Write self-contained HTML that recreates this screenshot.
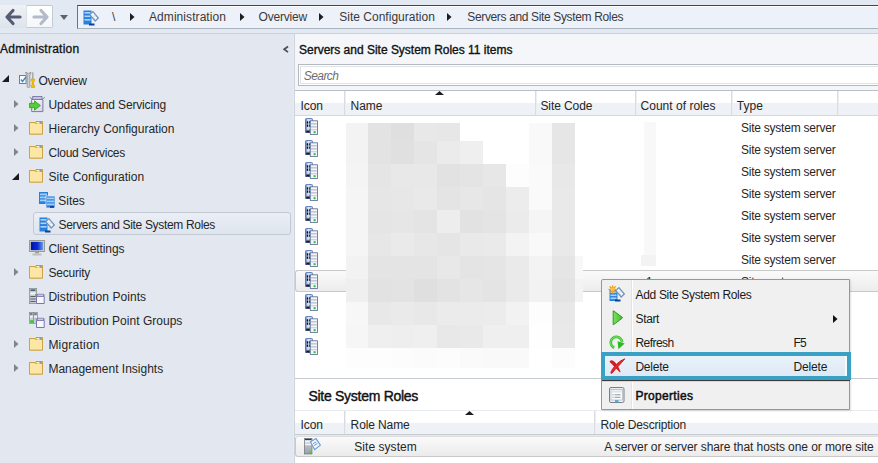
<!DOCTYPE html>
<html><head><meta charset="utf-8"><style>
html,body{margin:0;padding:0;width:878px;height:463px;overflow:hidden;background:#fff;font-family:"Liberation Sans", sans-serif;}
#root{position:relative;width:878px;height:463px;overflow:hidden;}
svg{position:absolute;overflow:visible}
</style></head><body><div id="root">
<div style="position:absolute;left:0px;top:0px;width:878px;height:34px;background:#e3e9f3"></div>
<div style="position:absolute;left:0px;top:5px;width:26px;height:23px;background:linear-gradient(#eef1f6,#dfe4ec);border-right:1px solid #d4d9e1"></div>
<div style="position:absolute;left:26px;top:5px;width:27px;height:23px;background:linear-gradient(#ffffff,#f4f6f9);border:1px solid #c3cad4;border-radius:0 2px 2px 0;box-sizing:border-box;border-left:1px solid #dde2e9"></div>
<svg style="left:4px;top:9px" width="18" height="16" viewBox="0 0 18 16"><path d="M9 1.5 L3 8 L9 14.5 M3.5 8 H16" fill="none" stroke="#565b73" stroke-width="3.2" stroke-linecap="round" stroke-linejoin="round"/></svg>
<svg style="left:32px;top:9px" width="18" height="16" viewBox="0 0 18 16"><path d="M9 1.5 L15 8 L9 14.5 M14.5 8 H2" fill="none" stroke="#b3bac9" stroke-width="3.2" stroke-linecap="round" stroke-linejoin="round"/></svg>
<svg style="left:60px;top:15px" width="8" height="5" viewBox="0 0 8 5"><path d="M0 0 H8 L4 5Z" fill="#5d6168"/></svg>
<div style="position:absolute;left:77px;top:5px;width:801px;height:24px;background:#edf1f9;border-top:1px solid #3e4656;border-left:1px solid #6d7480;border-bottom:1px solid #aab2bc;box-sizing:border-box;box-shadow:inset 0 1px 0 #fff"></div>
<div style="position:absolute;left:0px;top:33px;width:878px;height:1px;background:#c9d1dc"></div>
<svg style="left:83px;top:10px" width="17" height="16" viewBox="0 0 17 16">
<rect x="0.5" y="0.5" width="8" height="14" fill="#2a7fda"/>
<rect x="1.5" y="2" width="6" height="1.6" fill="#a6d6ff"/><rect x="1.5" y="5.5" width="6" height="1.6" fill="#a6d6ff"/><rect x="1.5" y="9" width="6" height="1.6" fill="#a6d6ff"/>
<rect x="6" y="13.5" width="5.5" height="2" fill="#0b3fa0"/>
<path d="M6.8 4.6 L9.9 1.6 L15.3 8 L12.2 11Z" fill="#f4f7fb" stroke="#6f94bc" stroke-width="1.3"/>
<path d="M10 5.5 L11.5 7 M11.5 5 L13 6.5 M10.5 7.5 L12 9" stroke="#b8c8dc" stroke-width="0.7"/>

</svg>
<div style="position:absolute;left:112px;top:6.84px;height:20px;line-height:20px;font-size:12px;font-weight:400;color:#404040;letter-spacing:0.000px;white-space:pre;">\</div>
<svg style="left:130px;top:13px" width="5" height="8" viewBox="0 0 5 8"><path d="M0 0 L4.5 4 L0 8Z" fill="#1e1e1e"/></svg>
<svg style="left:240px;top:13px" width="5" height="8" viewBox="0 0 5 8"><path d="M0 0 L4.5 4 L0 8Z" fill="#1e1e1e"/></svg>
<svg style="left:319px;top:13px" width="5" height="8" viewBox="0 0 5 8"><path d="M0 0 L4.5 4 L0 8Z" fill="#1e1e1e"/></svg>
<svg style="left:447px;top:13px" width="5" height="8" viewBox="0 0 5 8"><path d="M0 0 L4.5 4 L0 8Z" fill="#1e1e1e"/></svg>
<div style="position:absolute;left:149px;top:6.84px;height:20px;line-height:20px;font-size:12px;font-weight:400;color:#3a3a3a;letter-spacing:0.069px;white-space:pre;">Administration</div>
<div style="position:absolute;left:258.6px;top:6.84px;height:20px;line-height:20px;font-size:12px;font-weight:400;color:#3a3a3a;letter-spacing:-0.202px;white-space:pre;">Overview</div>
<div style="position:absolute;left:339.2px;top:6.84px;height:20px;line-height:20px;font-size:12px;font-weight:400;color:#3a3a3a;letter-spacing:0.017px;white-space:pre;">Site Configuration</div>
<div style="position:absolute;left:467.3px;top:6.84px;height:20px;line-height:20px;font-size:12px;font-weight:400;color:#3a3a3a;letter-spacing:-0.354px;white-space:pre;">Servers and Site System Roles</div>
<div style="position:absolute;left:0px;top:34px;width:293px;height:429px;background:#e3e8f0"></div>
<div style="position:absolute;left:293px;top:34px;width:1px;height:429px;background:#e7ebf2"></div>
<div style="position:absolute;left:294px;top:34px;width:1px;height:429px;background:#cdd4de"></div>
<div style="position:absolute;left:0px;top:38.84px;height:20px;line-height:20px;font-size:12px;font-weight:400;color:#111;letter-spacing:0.241px;white-space:pre;-webkit-text-stroke:0.3px #111">Administration</div>
<svg style="left:283px;top:45.5px" width="6" height="7" viewBox="0 0 6 7"><path d="M5 0.5 L1.2 3.3 L5 6.1" fill="none" stroke="#4a5058" stroke-width="1.8"/></svg>
<svg style="left:2px;top:75px" width="7" height="7" viewBox="0 0 7 7"><path d="M7 0 L7 7 L0 7Z" fill="#1a1a1a"/></svg>
<svg style="left:19px;top:72px" width="17" height="16" viewBox="0 0 17 16">
<rect x="0.5" y="3.5" width="6.5" height="8" fill="#fbfbfb" stroke="#7c7c7c" stroke-width="1"/>
<path d="M2 7.5 L3.5 9.5 L7 5" fill="none" stroke="#3a8ad0" stroke-width="1.4"/>
<path d="M6.5 0.5 Q7 2.5 8.2 3 V14.5 Q8.2 15.5 9.5 15.5 Q10.8 15.5 10.8 14.5 V3 Q12 2.5 12 0.5 L10.7 0.5 L10 2 L8.8 2 L8 0.5Z" fill="#d2d2d2" stroke="#8a8a8a" stroke-width="0.8"/>
<rect x="13.2" y="0.3" width="1.2" height="7" fill="#9a9a9a"/>
<path d="M12.2 7 H15.6 V8.8 L14.6 9.8 V12.5 L15.6 13.3 V15.5 H12.2 V13.3 L13.2 12.5 V9.8 L12.2 8.8Z" fill="#f2c100" stroke="#d39a00" stroke-width="0.6"/>
</svg>
<div style="position:absolute;left:38.5px;top:70.84px;height:20px;line-height:20px;font-size:12px;font-weight:400;color:#262626;letter-spacing:-0.239px;white-space:pre;">Overview</div>
<svg style="left:14px;top:100px" width="5" height="8" viewBox="0 0 5 8"><path d="M0 0 L4.5 4 L0 8Z" fill="#80858b"/></svg>
<svg style="left:29px;top:96px" width="17" height="17" viewBox="0 0 17 17">
<defs><linearGradient id="upg" x1="0" y1="0" x2="1" y2="1"><stop offset="0" stop-color="#ffffff"/><stop offset="1" stop-color="#d2d0e4"/></linearGradient></defs>
<path d="M2.7 3.5 H13.9 V15.6 H2.7Z" fill="url(#upg)" stroke="#7a78a6" stroke-width="1"/>
<rect x="3.7" y="0.5" width="9.2" height="3" fill="#c6c4de" stroke="#7a78a6" stroke-width="0.9"/>
<path d="M3.7 3.5 L0.8 1.2 M12.9 3.5 L15.8 1.2" stroke="#7a78a6" stroke-width="0.9"/>
<path d="M0.5 7.3 H5.5 V4.8 L11.4 9.5 L5.5 14.2 V11.7 H0.5Z" fill="#56cc3a" stroke="#2e9a20" stroke-width="0.8"/>
</svg>
<div style="position:absolute;left:48.6px;top:94.84px;height:20px;line-height:20px;font-size:12px;font-weight:400;color:#262626;letter-spacing:-0.160px;white-space:pre;">Updates and Servicing</div>
<svg style="left:14px;top:124px" width="5" height="8" viewBox="0 0 5 8"><path d="M0 0 L4.5 4 L0 8Z" fill="#80858b"/></svg>
<svg style="left:29px;top:121px" width="15" height="14" viewBox="0 0 15 14">
<path d="M0.5 1.5 H6 L7 0.5 H13.5 V13 H0.5Z" fill="#e9c46a" stroke="#c99b3c" stroke-width="1"/>
<rect x="8" y="1.3" width="3" height="1.2" fill="#ffffff"/><rect x="10.5" y="1.3" width="2.2" height="1.2" fill="#3a8ee0"/>
<path d="M0.5 1.5 H6 L7.5 3.3 H13.5 V13 H0.5Z" fill="#fbe29a" stroke="#cda347" stroke-width="1"/>
<rect x="1.2" y="3" width="11.6" height="9.3" fill="#fde7a4"/>
</svg>
<div style="position:absolute;left:48.6px;top:118.84px;height:20px;line-height:20px;font-size:12px;font-weight:400;color:#262626;letter-spacing:-0.011px;white-space:pre;">Hierarchy Configuration</div>
<svg style="left:14px;top:148px" width="5" height="8" viewBox="0 0 5 8"><path d="M0 0 L4.5 4 L0 8Z" fill="#80858b"/></svg>
<svg style="left:29px;top:145px" width="15" height="14" viewBox="0 0 15 14">
<path d="M0.5 1.5 H6 L7 0.5 H13.5 V13 H0.5Z" fill="#e9c46a" stroke="#c99b3c" stroke-width="1"/>
<rect x="8" y="1.3" width="3" height="1.2" fill="#ffffff"/><rect x="10.5" y="1.3" width="2.2" height="1.2" fill="#3a8ee0"/>
<path d="M0.5 1.5 H6 L7.5 3.3 H13.5 V13 H0.5Z" fill="#fbe29a" stroke="#cda347" stroke-width="1"/>
<rect x="1.2" y="3" width="11.6" height="9.3" fill="#fde7a4"/>
</svg>
<div style="position:absolute;left:48.6px;top:142.84px;height:20px;line-height:20px;font-size:12px;font-weight:400;color:#262626;letter-spacing:-0.315px;white-space:pre;">Cloud Services</div>
<svg style="left:12px;top:173px" width="7" height="7" viewBox="0 0 7 7"><path d="M7 0 L7 7 L0 7Z" fill="#1a1a1a"/></svg>
<svg style="left:29px;top:169px" width="15" height="14" viewBox="0 0 15 14">
<path d="M0.5 1.5 H6 L7 0.5 H13.5 V13 H0.5Z" fill="#e9c46a" stroke="#c99b3c" stroke-width="1"/>
<rect x="8" y="1.3" width="3" height="1.2" fill="#ffffff"/><rect x="10.5" y="1.3" width="2.2" height="1.2" fill="#3a8ee0"/>
<path d="M0.5 1.5 H6 L7.5 3.3 H13.5 V13 H0.5Z" fill="#fbe29a" stroke="#cda347" stroke-width="1"/>
<rect x="1.2" y="3" width="11.6" height="9.3" fill="#fde7a4"/>
</svg>
<div style="position:absolute;left:48.6px;top:166.84px;height:20px;line-height:20px;font-size:12px;font-weight:400;color:#262626;letter-spacing:0.006px;white-space:pre;">Site Configuration</div>
<svg style="left:38px;top:191px" width="18" height="18" viewBox="0 0 18 18">
<rect x="1" y="1" width="9" height="12" fill="#2a7fda"/>
<rect x="2" y="2.5" width="7" height="1.8" fill="#9fd0fb"/><rect x="2" y="5.5" width="7" height="1.8" fill="#9fd0fb"/><rect x="2" y="8.5" width="7" height="1.8" fill="#9fd0fb"/>
<rect x="8" y="5" width="9" height="12" fill="#2a7fda" stroke="#e3e8f0" stroke-width="0.8"/>
<rect x="9" y="6.5" width="7" height="1.8" fill="#9fd0fb"/><rect x="9" y="9.5" width="7" height="1.8" fill="#9fd0fb"/><rect x="9" y="12.5" width="7" height="1.8" fill="#9fd0fb"/>
<rect x="12" y="15" width="4" height="1.8" fill="#0b3fa0"/>
</svg>
<div style="position:absolute;left:58.3px;top:190.84px;height:20px;line-height:20px;font-size:12px;font-weight:400;color:#262626;letter-spacing:-0.037px;white-space:pre;">Sites</div>
<div style="position:absolute;left:33px;top:212px;width:258px;height:23px;box-sizing:border-box;border:1px solid #c3c9d3;border-radius:3px;background:linear-gradient(#eaeef5,#dfe5ee)"></div>
<svg style="left:39px;top:217px" width="17" height="16" viewBox="0 0 17 16">
<rect x="0.5" y="0.5" width="8" height="14" fill="#2a7fda"/>
<rect x="1.5" y="2" width="6" height="1.6" fill="#a6d6ff"/><rect x="1.5" y="5.5" width="6" height="1.6" fill="#a6d6ff"/><rect x="1.5" y="9" width="6" height="1.6" fill="#a6d6ff"/>
<rect x="6" y="13.5" width="5.5" height="2" fill="#0b3fa0"/>
<path d="M6.8 4.6 L9.9 1.6 L15.3 8 L12.2 11Z" fill="#f4f7fb" stroke="#6f94bc" stroke-width="1.3"/>
<path d="M10 5.5 L11.5 7 M11.5 5 L13 6.5 M10.5 7.5 L12 9" stroke="#b8c8dc" stroke-width="0.7"/>

</svg>
<div style="position:absolute;left:58.5px;top:214.84px;height:20px;line-height:20px;font-size:12px;font-weight:400;color:#262626;letter-spacing:-0.330px;white-space:pre;">Servers and Site System Roles</div>
<svg style="left:29px;top:240px" width="16" height="16" viewBox="0 0 16 16">
<rect x="0.5" y="0.5" width="15" height="11" fill="#d8d8d0" stroke="#9a9a90" stroke-width="1"/>
<defs><linearGradient id="scr" x1="0" y1="0" x2="1" y2="0"><stop offset="0" stop-color="#0010a8"/><stop offset="0.55" stop-color="#0a2ed0"/><stop offset="1" stop-color="#6aa0f0"/></linearGradient></defs>
<rect x="1.8" y="1.8" width="12.4" height="8.4" fill="url(#scr)"/>
<rect x="6" y="12" width="4" height="1.5" fill="#a0a098"/><rect x="3.5" y="13.5" width="9" height="2" fill="#c0c0b8"/>
</svg>
<div style="position:absolute;left:48.4px;top:238.84px;height:20px;line-height:20px;font-size:12px;font-weight:400;color:#262626;letter-spacing:-0.092px;white-space:pre;">Client Settings</div>
<svg style="left:14px;top:268px" width="5" height="8" viewBox="0 0 5 8"><path d="M0 0 L4.5 4 L0 8Z" fill="#80858b"/></svg>
<svg style="left:29px;top:265px" width="15" height="14" viewBox="0 0 15 14">
<path d="M0.5 1.5 H6 L7 0.5 H13.5 V13 H0.5Z" fill="#e9c46a" stroke="#c99b3c" stroke-width="1"/>
<rect x="8" y="1.3" width="3" height="1.2" fill="#ffffff"/><rect x="10.5" y="1.3" width="2.2" height="1.2" fill="#3a8ee0"/>
<path d="M0.5 1.5 H6 L7.5 3.3 H13.5 V13 H0.5Z" fill="#fbe29a" stroke="#cda347" stroke-width="1"/>
<rect x="1.2" y="3" width="11.6" height="9.3" fill="#fde7a4"/>
</svg>
<div style="position:absolute;left:48.4px;top:262.84px;height:20px;line-height:20px;font-size:12px;font-weight:400;color:#262626;letter-spacing:-0.195px;white-space:pre;">Security</div>
<svg style="left:29px;top:288px" width="16" height="16" viewBox="0 0 16 16">
<rect x="0.3" y="0.3" width="7.4" height="15.4" fill="#c8ccd0" stroke="#7a8088" stroke-width="0.6"/>
<rect x="1.5" y="1.5" width="5" height="1.2" fill="#1a3a5a"/>
<rect x="1.3" y="4.5" width="5.4" height="2" fill="#f4f6f8"/><rect x="1.3" y="8" width="5.4" height="1" fill="#5a6068"/><rect x="1.3" y="10.5" width="5.4" height="1" fill="#5a6068"/><rect x="1.3" y="13" width="5.4" height="1" fill="#5a6068"/>
<rect x="6" y="6" width="1.5" height="1.5" fill="#4ac040"/>
<path d="M7.5 8.3 H15.2 V15.5 H7.5Z" fill="#f6f6fb" stroke="#7a74b0" stroke-width="1"/>
<rect x="8.2" y="6.2" width="6.3" height="2.1" fill="#d6d3ea" stroke="#7a74b0" stroke-width="0.8"/>
<path d="M8.2 8.3 L6.6 6.6 M14.5 8.3 L16 6.6" stroke="#7a74b0" stroke-width="0.8"/>
</svg>
<div style="position:absolute;left:48.4px;top:286.84px;height:20px;line-height:20px;font-size:12px;font-weight:400;color:#262626;letter-spacing:0.052px;white-space:pre;">Distribution Points</div>
<svg style="left:29px;top:312px" width="16" height="16" viewBox="0 0 16 16">
<rect x="0.3" y="0.3" width="4" height="11" fill="#c8ccd0" stroke="#7a8088" stroke-width="0.6"/>
<rect x="4.5" y="0.3" width="4" height="11" fill="#c8ccd0" stroke="#7a8088" stroke-width="0.6"/>
<rect x="1" y="1.5" width="2.5" height="1" fill="#1a3a5a"/><rect x="5.2" y="1.5" width="2.5" height="1" fill="#1a3a5a"/>
<rect x="1" y="4" width="2.6" height="1.6" fill="#f4f6f8"/><rect x="5.2" y="4" width="2.6" height="1.6" fill="#f4f6f8"/>
<rect x="1.2" y="8.2" width="3" height="2.8" fill="#44c43a"/>
<path d="M7.5 8.3 H15.2 V15.5 H7.5Z" fill="#f6f6fb" stroke="#7a74b0" stroke-width="1"/>
<rect x="8.2" y="6.2" width="6.3" height="2.1" fill="#d6d3ea" stroke="#7a74b0" stroke-width="0.8"/>
<path d="M8.2 8.3 L6.6 6.6 M14.5 8.3 L16 6.6" stroke="#7a74b0" stroke-width="0.8"/>
</svg>
<div style="position:absolute;left:48.4px;top:310.84px;height:20px;line-height:20px;font-size:12px;font-weight:400;color:#262626;letter-spacing:0.024px;white-space:pre;">Distribution Point Groups</div>
<svg style="left:14px;top:340px" width="5" height="8" viewBox="0 0 5 8"><path d="M0 0 L4.5 4 L0 8Z" fill="#80858b"/></svg>
<svg style="left:29px;top:337px" width="15" height="14" viewBox="0 0 15 14">
<path d="M0.5 1.5 H6 L7 0.5 H13.5 V13 H0.5Z" fill="#e9c46a" stroke="#c99b3c" stroke-width="1"/>
<rect x="8" y="1.3" width="3" height="1.2" fill="#ffffff"/><rect x="10.5" y="1.3" width="2.2" height="1.2" fill="#3a8ee0"/>
<path d="M0.5 1.5 H6 L7.5 3.3 H13.5 V13 H0.5Z" fill="#fbe29a" stroke="#cda347" stroke-width="1"/>
<rect x="1.2" y="3" width="11.6" height="9.3" fill="#fde7a4"/>
</svg>
<div style="position:absolute;left:48.4px;top:334.84px;height:20px;line-height:20px;font-size:12px;font-weight:400;color:#262626;letter-spacing:0.216px;white-space:pre;">Migration</div>
<svg style="left:14px;top:364px" width="5" height="8" viewBox="0 0 5 8"><path d="M0 0 L4.5 4 L0 8Z" fill="#80858b"/></svg>
<svg style="left:29px;top:361px" width="15" height="14" viewBox="0 0 15 14">
<path d="M0.5 1.5 H6 L7 0.5 H13.5 V13 H0.5Z" fill="#e9c46a" stroke="#c99b3c" stroke-width="1"/>
<rect x="8" y="1.3" width="3" height="1.2" fill="#ffffff"/><rect x="10.5" y="1.3" width="2.2" height="1.2" fill="#3a8ee0"/>
<path d="M0.5 1.5 H6 L7.5 3.3 H13.5 V13 H0.5Z" fill="#fbe29a" stroke="#cda347" stroke-width="1"/>
<rect x="1.2" y="3" width="11.6" height="9.3" fill="#fde7a4"/>
</svg>
<div style="position:absolute;left:48.4px;top:358.84px;height:20px;line-height:20px;font-size:12px;font-weight:400;color:#262626;letter-spacing:0.003px;white-space:pre;">Management Insights</div>
<div style="position:absolute;left:295px;top:34px;width:583px;height:82px;background:#f4f6fa"></div>
<div style="position:absolute;left:299px;top:39.84px;height:20px;line-height:20px;font-size:12px;font-weight:400;color:#111;letter-spacing:-0.010px;white-space:pre;-webkit-text-stroke:0.35px #111">Servers and Site System Roles 11 items</div>
<div style="position:absolute;left:298px;top:64px;width:580px;height:22px;box-sizing:border-box;border:1px solid #b4b9bf;border-right:none;background:#fff"></div>
<div style="position:absolute;left:300px;top:66px;width:578px;height:18px;box-sizing:border-box;border:1px solid #dfe2e6;border-right:none"></div>
<div style="position:absolute;left:303.8px;top:65.84px;height:20px;line-height:20px;font-size:12px;font-weight:400;color:#6e6e6e;letter-spacing:-0.589px;white-space:pre;font-style:italic">Search</div>
<div style="position:absolute;left:295px;top:90px;width:583px;height:288px;background:#fff"></div>
<div style="position:absolute;left:295px;top:90px;width:583px;height:1px;background:#b9bfc6"></div>
<div style="position:absolute;left:295px;top:91px;width:583px;height:12px;background:#fff"></div>
<div style="position:absolute;left:295px;top:103px;width:583px;height:12px;background:#eef1f5"></div>
<div style="position:absolute;left:295px;top:115px;width:583px;height:1px;background:#d5d9de"></div>
<div style="position:absolute;left:344px;top:91px;width:2px;height:24px;background:linear-gradient(90deg,#cfd3d8,#f6f7f9)"></div>
<div style="position:absolute;left:535px;top:91px;width:2px;height:24px;background:linear-gradient(90deg,#cfd3d8,#f6f7f9)"></div>
<div style="position:absolute;left:635px;top:91px;width:2px;height:24px;background:linear-gradient(90deg,#cfd3d8,#f6f7f9)"></div>
<div style="position:absolute;left:731px;top:91px;width:2px;height:24px;background:linear-gradient(90deg,#cfd3d8,#f6f7f9)"></div>
<div style="position:absolute;left:837px;top:91px;width:2px;height:24px;background:linear-gradient(90deg,#cfd3d8,#f6f7f9)"></div>
<div style="position:absolute;left:300.5px;top:95.84px;height:20px;line-height:20px;font-size:12px;font-weight:400;color:#262626;letter-spacing:-0.047px;white-space:pre;">Icon</div>
<div style="position:absolute;left:350.5px;top:95.84px;height:20px;line-height:20px;font-size:12px;font-weight:400;color:#262626;letter-spacing:-0.004px;white-space:pre;">Name</div>
<div style="position:absolute;left:540.4px;top:95.84px;height:20px;line-height:20px;font-size:12px;font-weight:400;color:#262626;letter-spacing:-0.078px;white-space:pre;">Site Code</div>
<div style="position:absolute;left:640.5px;top:95.84px;height:20px;line-height:20px;font-size:12px;font-weight:400;color:#262626;letter-spacing:0.020px;white-space:pre;">Count of roles</div>
<div style="position:absolute;left:736.8px;top:95.84px;height:20px;line-height:20px;font-size:12px;font-weight:400;color:#262626;letter-spacing:-0.004px;white-space:pre;">Type</div>
<svg style="left:435px;top:91px" width="9" height="4" viewBox="0 0 9 4"><path d="M0 4 L4.5 0 L9 4Z" fill="#1e1e1e"/></svg>
<div style="position:absolute;left:295px;top:270px;width:583px;height:22px;box-sizing:border-box;border:1px solid #c9c9c9;border-right:none;border-radius:3px 0 0 3px;background:linear-gradient(#fafafa,#ececec)"></div>
<svg style="left:305px;top:118px" width="14" height="17" viewBox="0 0 14 17">
<defs><linearGradient id="bg118" x1="0" y1="0" x2="1" y2="0"><stop offset="0" stop-color="#4a72c8"/><stop offset="0.35" stop-color="#dfe8f8"/><stop offset="1" stop-color="#aabfe6"/></linearGradient></defs>
<path d="M0.5 1.5 Q0.5 0.5 1.5 0.5 H6.5 Q7.5 0.5 7.5 1.5 V14.5 H0.5Z" fill="url(#bg118)" stroke="#4a6ab0" stroke-width="0.8"/>
<rect x="1.8" y="3.3" width="1.4" height="2.3" fill="#0a0a0a"/><rect x="4.2" y="3.3" width="1.4" height="2.3" fill="#0a0a0a"/>
<rect x="1.8" y="6.5" width="1.4" height="2.3" fill="#0a0a0a"/><rect x="4.2" y="6.5" width="1.4" height="2.3" fill="#0a0a0a"/>
<path d="M1 14.5 L2 11.5 L3 13.5 L4.2 11 L5 14.5Z" fill="#0a0a0a"/>
<rect x="5.3" y="2.8" width="7.2" height="13.7" fill="#f4f6fa" stroke="#66789a" stroke-width="0.9"/>
<rect x="6" y="5.3" width="5.8" height="1.1" fill="#a9b5c6"/><rect x="6" y="8.3" width="5.8" height="1.1" fill="#a9b5c6"/><rect x="6" y="11.3" width="5.8" height="0.9" fill="#b9c3d2"/>
<rect x="8.6" y="13.2" width="2" height="2" fill="#22c040"/>
</svg>
<svg style="left:305px;top:140px" width="14" height="17" viewBox="0 0 14 17">
<defs><linearGradient id="bg140" x1="0" y1="0" x2="1" y2="0"><stop offset="0" stop-color="#4a72c8"/><stop offset="0.35" stop-color="#dfe8f8"/><stop offset="1" stop-color="#aabfe6"/></linearGradient></defs>
<path d="M0.5 1.5 Q0.5 0.5 1.5 0.5 H6.5 Q7.5 0.5 7.5 1.5 V14.5 H0.5Z" fill="url(#bg140)" stroke="#4a6ab0" stroke-width="0.8"/>
<rect x="1.8" y="3.3" width="1.4" height="2.3" fill="#0a0a0a"/><rect x="4.2" y="3.3" width="1.4" height="2.3" fill="#0a0a0a"/>
<rect x="1.8" y="6.5" width="1.4" height="2.3" fill="#0a0a0a"/><rect x="4.2" y="6.5" width="1.4" height="2.3" fill="#0a0a0a"/>
<path d="M1 14.5 L2 11.5 L3 13.5 L4.2 11 L5 14.5Z" fill="#0a0a0a"/>
<rect x="5.3" y="2.8" width="7.2" height="13.7" fill="#f4f6fa" stroke="#66789a" stroke-width="0.9"/>
<rect x="6" y="5.3" width="5.8" height="1.1" fill="#a9b5c6"/><rect x="6" y="8.3" width="5.8" height="1.1" fill="#a9b5c6"/><rect x="6" y="11.3" width="5.8" height="0.9" fill="#b9c3d2"/>
<rect x="8.6" y="13.2" width="2" height="2" fill="#22c040"/>
</svg>
<svg style="left:305px;top:162px" width="14" height="17" viewBox="0 0 14 17">
<defs><linearGradient id="bg162" x1="0" y1="0" x2="1" y2="0"><stop offset="0" stop-color="#4a72c8"/><stop offset="0.35" stop-color="#dfe8f8"/><stop offset="1" stop-color="#aabfe6"/></linearGradient></defs>
<path d="M0.5 1.5 Q0.5 0.5 1.5 0.5 H6.5 Q7.5 0.5 7.5 1.5 V14.5 H0.5Z" fill="url(#bg162)" stroke="#4a6ab0" stroke-width="0.8"/>
<rect x="1.8" y="3.3" width="1.4" height="2.3" fill="#0a0a0a"/><rect x="4.2" y="3.3" width="1.4" height="2.3" fill="#0a0a0a"/>
<rect x="1.8" y="6.5" width="1.4" height="2.3" fill="#0a0a0a"/><rect x="4.2" y="6.5" width="1.4" height="2.3" fill="#0a0a0a"/>
<path d="M1 14.5 L2 11.5 L3 13.5 L4.2 11 L5 14.5Z" fill="#0a0a0a"/>
<rect x="5.3" y="2.8" width="7.2" height="13.7" fill="#f4f6fa" stroke="#66789a" stroke-width="0.9"/>
<rect x="6" y="5.3" width="5.8" height="1.1" fill="#a9b5c6"/><rect x="6" y="8.3" width="5.8" height="1.1" fill="#a9b5c6"/><rect x="6" y="11.3" width="5.8" height="0.9" fill="#b9c3d2"/>
<rect x="8.6" y="13.2" width="2" height="2" fill="#22c040"/>
</svg>
<svg style="left:305px;top:184px" width="14" height="17" viewBox="0 0 14 17">
<defs><linearGradient id="bg184" x1="0" y1="0" x2="1" y2="0"><stop offset="0" stop-color="#4a72c8"/><stop offset="0.35" stop-color="#dfe8f8"/><stop offset="1" stop-color="#aabfe6"/></linearGradient></defs>
<path d="M0.5 1.5 Q0.5 0.5 1.5 0.5 H6.5 Q7.5 0.5 7.5 1.5 V14.5 H0.5Z" fill="url(#bg184)" stroke="#4a6ab0" stroke-width="0.8"/>
<rect x="1.8" y="3.3" width="1.4" height="2.3" fill="#0a0a0a"/><rect x="4.2" y="3.3" width="1.4" height="2.3" fill="#0a0a0a"/>
<rect x="1.8" y="6.5" width="1.4" height="2.3" fill="#0a0a0a"/><rect x="4.2" y="6.5" width="1.4" height="2.3" fill="#0a0a0a"/>
<path d="M1 14.5 L2 11.5 L3 13.5 L4.2 11 L5 14.5Z" fill="#0a0a0a"/>
<rect x="5.3" y="2.8" width="7.2" height="13.7" fill="#f4f6fa" stroke="#66789a" stroke-width="0.9"/>
<rect x="6" y="5.3" width="5.8" height="1.1" fill="#a9b5c6"/><rect x="6" y="8.3" width="5.8" height="1.1" fill="#a9b5c6"/><rect x="6" y="11.3" width="5.8" height="0.9" fill="#b9c3d2"/>
<rect x="8.6" y="13.2" width="2" height="2" fill="#22c040"/>
</svg>
<svg style="left:305px;top:206px" width="14" height="17" viewBox="0 0 14 17">
<defs><linearGradient id="bg206" x1="0" y1="0" x2="1" y2="0"><stop offset="0" stop-color="#4a72c8"/><stop offset="0.35" stop-color="#dfe8f8"/><stop offset="1" stop-color="#aabfe6"/></linearGradient></defs>
<path d="M0.5 1.5 Q0.5 0.5 1.5 0.5 H6.5 Q7.5 0.5 7.5 1.5 V14.5 H0.5Z" fill="url(#bg206)" stroke="#4a6ab0" stroke-width="0.8"/>
<rect x="1.8" y="3.3" width="1.4" height="2.3" fill="#0a0a0a"/><rect x="4.2" y="3.3" width="1.4" height="2.3" fill="#0a0a0a"/>
<rect x="1.8" y="6.5" width="1.4" height="2.3" fill="#0a0a0a"/><rect x="4.2" y="6.5" width="1.4" height="2.3" fill="#0a0a0a"/>
<path d="M1 14.5 L2 11.5 L3 13.5 L4.2 11 L5 14.5Z" fill="#0a0a0a"/>
<rect x="5.3" y="2.8" width="7.2" height="13.7" fill="#f4f6fa" stroke="#66789a" stroke-width="0.9"/>
<rect x="6" y="5.3" width="5.8" height="1.1" fill="#a9b5c6"/><rect x="6" y="8.3" width="5.8" height="1.1" fill="#a9b5c6"/><rect x="6" y="11.3" width="5.8" height="0.9" fill="#b9c3d2"/>
<rect x="8.6" y="13.2" width="2" height="2" fill="#22c040"/>
</svg>
<svg style="left:305px;top:228px" width="14" height="17" viewBox="0 0 14 17">
<defs><linearGradient id="bg228" x1="0" y1="0" x2="1" y2="0"><stop offset="0" stop-color="#4a72c8"/><stop offset="0.35" stop-color="#dfe8f8"/><stop offset="1" stop-color="#aabfe6"/></linearGradient></defs>
<path d="M0.5 1.5 Q0.5 0.5 1.5 0.5 H6.5 Q7.5 0.5 7.5 1.5 V14.5 H0.5Z" fill="url(#bg228)" stroke="#4a6ab0" stroke-width="0.8"/>
<rect x="1.8" y="3.3" width="1.4" height="2.3" fill="#0a0a0a"/><rect x="4.2" y="3.3" width="1.4" height="2.3" fill="#0a0a0a"/>
<rect x="1.8" y="6.5" width="1.4" height="2.3" fill="#0a0a0a"/><rect x="4.2" y="6.5" width="1.4" height="2.3" fill="#0a0a0a"/>
<path d="M1 14.5 L2 11.5 L3 13.5 L4.2 11 L5 14.5Z" fill="#0a0a0a"/>
<rect x="5.3" y="2.8" width="7.2" height="13.7" fill="#f4f6fa" stroke="#66789a" stroke-width="0.9"/>
<rect x="6" y="5.3" width="5.8" height="1.1" fill="#a9b5c6"/><rect x="6" y="8.3" width="5.8" height="1.1" fill="#a9b5c6"/><rect x="6" y="11.3" width="5.8" height="0.9" fill="#b9c3d2"/>
<rect x="8.6" y="13.2" width="2" height="2" fill="#22c040"/>
</svg>
<svg style="left:305px;top:250px" width="14" height="17" viewBox="0 0 14 17">
<defs><linearGradient id="bg250" x1="0" y1="0" x2="1" y2="0"><stop offset="0" stop-color="#4a72c8"/><stop offset="0.35" stop-color="#dfe8f8"/><stop offset="1" stop-color="#aabfe6"/></linearGradient></defs>
<path d="M0.5 1.5 Q0.5 0.5 1.5 0.5 H6.5 Q7.5 0.5 7.5 1.5 V14.5 H0.5Z" fill="url(#bg250)" stroke="#4a6ab0" stroke-width="0.8"/>
<rect x="1.8" y="3.3" width="1.4" height="2.3" fill="#0a0a0a"/><rect x="4.2" y="3.3" width="1.4" height="2.3" fill="#0a0a0a"/>
<rect x="1.8" y="6.5" width="1.4" height="2.3" fill="#0a0a0a"/><rect x="4.2" y="6.5" width="1.4" height="2.3" fill="#0a0a0a"/>
<path d="M1 14.5 L2 11.5 L3 13.5 L4.2 11 L5 14.5Z" fill="#0a0a0a"/>
<rect x="5.3" y="2.8" width="7.2" height="13.7" fill="#f4f6fa" stroke="#66789a" stroke-width="0.9"/>
<rect x="6" y="5.3" width="5.8" height="1.1" fill="#a9b5c6"/><rect x="6" y="8.3" width="5.8" height="1.1" fill="#a9b5c6"/><rect x="6" y="11.3" width="5.8" height="0.9" fill="#b9c3d2"/>
<rect x="8.6" y="13.2" width="2" height="2" fill="#22c040"/>
</svg>
<svg style="left:305px;top:272px" width="14" height="17" viewBox="0 0 14 17">
<defs><linearGradient id="bg272" x1="0" y1="0" x2="1" y2="0"><stop offset="0" stop-color="#4a72c8"/><stop offset="0.35" stop-color="#dfe8f8"/><stop offset="1" stop-color="#aabfe6"/></linearGradient></defs>
<path d="M0.5 1.5 Q0.5 0.5 1.5 0.5 H6.5 Q7.5 0.5 7.5 1.5 V14.5 H0.5Z" fill="url(#bg272)" stroke="#4a6ab0" stroke-width="0.8"/>
<rect x="1.8" y="3.3" width="1.4" height="2.3" fill="#0a0a0a"/><rect x="4.2" y="3.3" width="1.4" height="2.3" fill="#0a0a0a"/>
<rect x="1.8" y="6.5" width="1.4" height="2.3" fill="#0a0a0a"/><rect x="4.2" y="6.5" width="1.4" height="2.3" fill="#0a0a0a"/>
<path d="M1 14.5 L2 11.5 L3 13.5 L4.2 11 L5 14.5Z" fill="#0a0a0a"/>
<rect x="5.3" y="2.8" width="7.2" height="13.7" fill="#f4f6fa" stroke="#66789a" stroke-width="0.9"/>
<rect x="6" y="5.3" width="5.8" height="1.1" fill="#a9b5c6"/><rect x="6" y="8.3" width="5.8" height="1.1" fill="#a9b5c6"/><rect x="6" y="11.3" width="5.8" height="0.9" fill="#b9c3d2"/>
<rect x="8.6" y="13.2" width="2" height="2" fill="#22c040"/>
</svg>
<svg style="left:305px;top:294px" width="14" height="17" viewBox="0 0 14 17">
<defs><linearGradient id="bg294" x1="0" y1="0" x2="1" y2="0"><stop offset="0" stop-color="#4a72c8"/><stop offset="0.35" stop-color="#dfe8f8"/><stop offset="1" stop-color="#aabfe6"/></linearGradient></defs>
<path d="M0.5 1.5 Q0.5 0.5 1.5 0.5 H6.5 Q7.5 0.5 7.5 1.5 V14.5 H0.5Z" fill="url(#bg294)" stroke="#4a6ab0" stroke-width="0.8"/>
<rect x="1.8" y="3.3" width="1.4" height="2.3" fill="#0a0a0a"/><rect x="4.2" y="3.3" width="1.4" height="2.3" fill="#0a0a0a"/>
<rect x="1.8" y="6.5" width="1.4" height="2.3" fill="#0a0a0a"/><rect x="4.2" y="6.5" width="1.4" height="2.3" fill="#0a0a0a"/>
<path d="M1 14.5 L2 11.5 L3 13.5 L4.2 11 L5 14.5Z" fill="#0a0a0a"/>
<rect x="5.3" y="2.8" width="7.2" height="13.7" fill="#f4f6fa" stroke="#66789a" stroke-width="0.9"/>
<rect x="6" y="5.3" width="5.8" height="1.1" fill="#a9b5c6"/><rect x="6" y="8.3" width="5.8" height="1.1" fill="#a9b5c6"/><rect x="6" y="11.3" width="5.8" height="0.9" fill="#b9c3d2"/>
<rect x="8.6" y="13.2" width="2" height="2" fill="#22c040"/>
</svg>
<svg style="left:305px;top:316px" width="14" height="17" viewBox="0 0 14 17">
<defs><linearGradient id="bg316" x1="0" y1="0" x2="1" y2="0"><stop offset="0" stop-color="#4a72c8"/><stop offset="0.35" stop-color="#dfe8f8"/><stop offset="1" stop-color="#aabfe6"/></linearGradient></defs>
<path d="M0.5 1.5 Q0.5 0.5 1.5 0.5 H6.5 Q7.5 0.5 7.5 1.5 V14.5 H0.5Z" fill="url(#bg316)" stroke="#4a6ab0" stroke-width="0.8"/>
<rect x="1.8" y="3.3" width="1.4" height="2.3" fill="#0a0a0a"/><rect x="4.2" y="3.3" width="1.4" height="2.3" fill="#0a0a0a"/>
<rect x="1.8" y="6.5" width="1.4" height="2.3" fill="#0a0a0a"/><rect x="4.2" y="6.5" width="1.4" height="2.3" fill="#0a0a0a"/>
<path d="M1 14.5 L2 11.5 L3 13.5 L4.2 11 L5 14.5Z" fill="#0a0a0a"/>
<rect x="5.3" y="2.8" width="7.2" height="13.7" fill="#f4f6fa" stroke="#66789a" stroke-width="0.9"/>
<rect x="6" y="5.3" width="5.8" height="1.1" fill="#a9b5c6"/><rect x="6" y="8.3" width="5.8" height="1.1" fill="#a9b5c6"/><rect x="6" y="11.3" width="5.8" height="0.9" fill="#b9c3d2"/>
<rect x="8.6" y="13.2" width="2" height="2" fill="#22c040"/>
</svg>
<svg style="left:305px;top:338px" width="14" height="17" viewBox="0 0 14 17">
<defs><linearGradient id="bg338" x1="0" y1="0" x2="1" y2="0"><stop offset="0" stop-color="#4a72c8"/><stop offset="0.35" stop-color="#dfe8f8"/><stop offset="1" stop-color="#aabfe6"/></linearGradient></defs>
<path d="M0.5 1.5 Q0.5 0.5 1.5 0.5 H6.5 Q7.5 0.5 7.5 1.5 V14.5 H0.5Z" fill="url(#bg338)" stroke="#4a6ab0" stroke-width="0.8"/>
<rect x="1.8" y="3.3" width="1.4" height="2.3" fill="#0a0a0a"/><rect x="4.2" y="3.3" width="1.4" height="2.3" fill="#0a0a0a"/>
<rect x="1.8" y="6.5" width="1.4" height="2.3" fill="#0a0a0a"/><rect x="4.2" y="6.5" width="1.4" height="2.3" fill="#0a0a0a"/>
<path d="M1 14.5 L2 11.5 L3 13.5 L4.2 11 L5 14.5Z" fill="#0a0a0a"/>
<rect x="5.3" y="2.8" width="7.2" height="13.7" fill="#f4f6fa" stroke="#66789a" stroke-width="0.9"/>
<rect x="6" y="5.3" width="5.8" height="1.1" fill="#a9b5c6"/><rect x="6" y="8.3" width="5.8" height="1.1" fill="#a9b5c6"/><rect x="6" y="11.3" width="5.8" height="0.9" fill="#b9c3d2"/>
<rect x="8.6" y="13.2" width="2" height="2" fill="#22c040"/>
</svg>
<div style="position:absolute;left:741px;top:117.84px;height:20px;line-height:20px;font-size:12px;font-weight:400;color:#262626;letter-spacing:-0.239px;white-space:pre;">Site system server</div>
<div style="position:absolute;left:741px;top:139.84px;height:20px;line-height:20px;font-size:12px;font-weight:400;color:#262626;letter-spacing:-0.239px;white-space:pre;">Site system server</div>
<div style="position:absolute;left:741px;top:161.84px;height:20px;line-height:20px;font-size:12px;font-weight:400;color:#262626;letter-spacing:-0.239px;white-space:pre;">Site system server</div>
<div style="position:absolute;left:741px;top:183.84px;height:20px;line-height:20px;font-size:12px;font-weight:400;color:#262626;letter-spacing:-0.239px;white-space:pre;">Site system server</div>
<div style="position:absolute;left:741px;top:205.84px;height:20px;line-height:20px;font-size:12px;font-weight:400;color:#262626;letter-spacing:-0.239px;white-space:pre;">Site system server</div>
<div style="position:absolute;left:741px;top:227.84px;height:20px;line-height:20px;font-size:12px;font-weight:400;color:#262626;letter-spacing:-0.239px;white-space:pre;">Site system server</div>
<div style="position:absolute;left:741px;top:249.84px;height:20px;line-height:20px;font-size:12px;font-weight:400;color:#262626;letter-spacing:-0.239px;white-space:pre;">Site system server</div>
<div style="position:absolute;left:646px;top:271.84px;height:20px;line-height:20px;font-size:12px;font-weight:400;color:#262626;letter-spacing:0.000px;white-space:pre;">1</div>
<div style="position:absolute;left:741px;top:271.84px;height:20px;line-height:20px;font-size:12px;font-weight:400;color:#262626;letter-spacing:-0.239px;white-space:pre;">Site system server</div>
<div style="position:absolute;left:346px;top:123px;width:22px;height:18px;background:rgb(243,243,243)"></div>
<div style="position:absolute;left:368px;top:123px;width:23px;height:18px;background:rgb(227,227,227)"></div>
<div style="position:absolute;left:391px;top:123px;width:23px;height:18px;background:rgb(223,223,223)"></div>
<div style="position:absolute;left:414px;top:123px;width:23px;height:18px;background:rgb(232,232,232)"></div>
<div style="position:absolute;left:437px;top:123px;width:23px;height:18px;background:rgb(231,231,231)"></div>
<div style="position:absolute;left:529px;top:123px;width:23px;height:18px;background:rgb(249,249,249)"></div>
<div style="position:absolute;left:552px;top:123px;width:23px;height:18px;background:rgb(230,230,230)"></div>
<div style="position:absolute;left:346px;top:141px;width:22px;height:23px;background:rgb(243,243,243)"></div>
<div style="position:absolute;left:368px;top:141px;width:23px;height:23px;background:rgb(227,227,227)"></div>
<div style="position:absolute;left:391px;top:141px;width:23px;height:23px;background:rgb(224,224,224)"></div>
<div style="position:absolute;left:414px;top:141px;width:23px;height:23px;background:rgb(229,229,229)"></div>
<div style="position:absolute;left:437px;top:141px;width:23px;height:23px;background:rgb(235,235,235)"></div>
<div style="position:absolute;left:460px;top:141px;width:23px;height:23px;background:rgb(239,239,239)"></div>
<div style="position:absolute;left:529px;top:141px;width:23px;height:23px;background:rgb(249,249,249)"></div>
<div style="position:absolute;left:552px;top:141px;width:23px;height:23px;background:rgb(230,230,230)"></div>
<div style="position:absolute;left:346px;top:164px;width:22px;height:23px;background:rgb(244,244,244)"></div>
<div style="position:absolute;left:368px;top:164px;width:23px;height:23px;background:rgb(229,229,229)"></div>
<div style="position:absolute;left:391px;top:164px;width:23px;height:23px;background:rgb(232,232,232)"></div>
<div style="position:absolute;left:414px;top:164px;width:23px;height:23px;background:rgb(232,232,232)"></div>
<div style="position:absolute;left:437px;top:164px;width:23px;height:23px;background:rgb(226,226,226)"></div>
<div style="position:absolute;left:460px;top:164px;width:23px;height:23px;background:rgb(228,228,228)"></div>
<div style="position:absolute;left:483px;top:164px;width:23px;height:23px;background:rgb(231,231,231)"></div>
<div style="position:absolute;left:506px;top:164px;width:23px;height:23px;background:rgb(253,253,253)"></div>
<div style="position:absolute;left:529px;top:164px;width:23px;height:23px;background:rgb(250,250,250)"></div>
<div style="position:absolute;left:552px;top:164px;width:23px;height:23px;background:rgb(232,232,232)"></div>
<div style="position:absolute;left:346px;top:187px;width:22px;height:23px;background:rgb(245,245,245)"></div>
<div style="position:absolute;left:368px;top:187px;width:23px;height:23px;background:rgb(230,230,230)"></div>
<div style="position:absolute;left:391px;top:187px;width:23px;height:23px;background:rgb(231,231,231)"></div>
<div style="position:absolute;left:414px;top:187px;width:23px;height:23px;background:rgb(233,233,233)"></div>
<div style="position:absolute;left:437px;top:187px;width:23px;height:23px;background:rgb(228,228,228)"></div>
<div style="position:absolute;left:460px;top:187px;width:23px;height:23px;background:rgb(231,231,231)"></div>
<div style="position:absolute;left:483px;top:187px;width:23px;height:23px;background:rgb(229,229,229)"></div>
<div style="position:absolute;left:506px;top:187px;width:23px;height:23px;background:rgb(236,236,236)"></div>
<div style="position:absolute;left:529px;top:187px;width:23px;height:23px;background:rgb(250,250,250)"></div>
<div style="position:absolute;left:552px;top:187px;width:23px;height:23px;background:rgb(233,233,233)"></div>
<div style="position:absolute;left:346px;top:210px;width:22px;height:23px;background:rgb(245,245,245)"></div>
<div style="position:absolute;left:368px;top:210px;width:23px;height:23px;background:rgb(229,229,229)"></div>
<div style="position:absolute;left:391px;top:210px;width:23px;height:23px;background:rgb(230,230,230)"></div>
<div style="position:absolute;left:414px;top:210px;width:23px;height:23px;background:rgb(228,228,228)"></div>
<div style="position:absolute;left:437px;top:210px;width:23px;height:23px;background:rgb(237,237,237)"></div>
<div style="position:absolute;left:460px;top:210px;width:23px;height:23px;background:rgb(226,226,226)"></div>
<div style="position:absolute;left:483px;top:210px;width:23px;height:23px;background:rgb(228,228,228)"></div>
<div style="position:absolute;left:506px;top:210px;width:23px;height:23px;background:rgb(235,235,235)"></div>
<div style="position:absolute;left:529px;top:210px;width:23px;height:23px;background:rgb(245,245,245)"></div>
<div style="position:absolute;left:552px;top:210px;width:23px;height:23px;background:rgb(233,233,233)"></div>
<div style="position:absolute;left:346px;top:233px;width:22px;height:23px;background:rgb(245,245,245)"></div>
<div style="position:absolute;left:368px;top:233px;width:23px;height:23px;background:rgb(231,231,231)"></div>
<div style="position:absolute;left:391px;top:233px;width:23px;height:23px;background:rgb(234,234,234)"></div>
<div style="position:absolute;left:414px;top:233px;width:23px;height:23px;background:rgb(231,231,231)"></div>
<div style="position:absolute;left:437px;top:233px;width:23px;height:23px;background:rgb(229,229,229)"></div>
<div style="position:absolute;left:460px;top:233px;width:23px;height:23px;background:rgb(233,233,233)"></div>
<div style="position:absolute;left:483px;top:233px;width:23px;height:23px;background:rgb(234,234,234)"></div>
<div style="position:absolute;left:506px;top:233px;width:23px;height:23px;background:rgb(243,243,243)"></div>
<div style="position:absolute;left:529px;top:233px;width:23px;height:23px;background:rgb(249,249,249)"></div>
<div style="position:absolute;left:552px;top:233px;width:23px;height:23px;background:rgb(233,233,233)"></div>
<div style="position:absolute;left:346px;top:256px;width:22px;height:23px;background:rgb(242,242,242)"></div>
<div style="position:absolute;left:368px;top:256px;width:23px;height:23px;background:rgb(228,228,228)"></div>
<div style="position:absolute;left:391px;top:256px;width:23px;height:23px;background:rgb(228,228,228)"></div>
<div style="position:absolute;left:414px;top:256px;width:23px;height:23px;background:rgb(228,228,228)"></div>
<div style="position:absolute;left:437px;top:256px;width:23px;height:23px;background:rgb(232,232,232)"></div>
<div style="position:absolute;left:460px;top:256px;width:23px;height:23px;background:rgb(228,228,228)"></div>
<div style="position:absolute;left:483px;top:256px;width:23px;height:23px;background:rgb(229,229,229)"></div>
<div style="position:absolute;left:506px;top:256px;width:23px;height:23px;background:rgb(234,234,234)"></div>
<div style="position:absolute;left:529px;top:256px;width:23px;height:23px;background:rgb(243,243,243)"></div>
<div style="position:absolute;left:552px;top:256px;width:23px;height:23px;background:rgb(229,229,229)"></div>
<div style="position:absolute;left:346px;top:279px;width:22px;height:23px;background:rgb(239,239,239)"></div>
<div style="position:absolute;left:368px;top:279px;width:23px;height:23px;background:rgb(226,226,226)"></div>
<div style="position:absolute;left:391px;top:279px;width:23px;height:23px;background:rgb(227,227,227)"></div>
<div style="position:absolute;left:414px;top:279px;width:23px;height:23px;background:rgb(223,223,223)"></div>
<div style="position:absolute;left:437px;top:279px;width:23px;height:23px;background:rgb(227,227,227)"></div>
<div style="position:absolute;left:460px;top:279px;width:23px;height:23px;background:rgb(230,230,230)"></div>
<div style="position:absolute;left:483px;top:279px;width:23px;height:23px;background:rgb(228,228,228)"></div>
<div style="position:absolute;left:506px;top:279px;width:23px;height:23px;background:rgb(234,234,234)"></div>
<div style="position:absolute;left:529px;top:279px;width:23px;height:23px;background:rgb(242,242,242)"></div>
<div style="position:absolute;left:552px;top:279px;width:23px;height:23px;background:rgb(227,227,227)"></div>
<div style="position:absolute;left:346px;top:302px;width:22px;height:23px;background:rgb(247,247,247)"></div>
<div style="position:absolute;left:368px;top:302px;width:23px;height:23px;background:rgb(232,232,232)"></div>
<div style="position:absolute;left:391px;top:302px;width:23px;height:23px;background:rgb(234,234,234)"></div>
<div style="position:absolute;left:414px;top:302px;width:23px;height:23px;background:rgb(232,232,232)"></div>
<div style="position:absolute;left:437px;top:302px;width:23px;height:23px;background:rgb(235,235,235)"></div>
<div style="position:absolute;left:460px;top:302px;width:23px;height:23px;background:rgb(235,235,235)"></div>
<div style="position:absolute;left:483px;top:302px;width:23px;height:23px;background:rgb(236,236,236)"></div>
<div style="position:absolute;left:506px;top:302px;width:23px;height:23px;background:rgb(242,242,242)"></div>
<div style="position:absolute;left:529px;top:302px;width:23px;height:23px;background:rgb(253,253,253)"></div>
<div style="position:absolute;left:552px;top:302px;width:23px;height:23px;background:rgb(232,232,232)"></div>
<div style="position:absolute;left:346px;top:325px;width:22px;height:23px;background:rgb(246,246,246)"></div>
<div style="position:absolute;left:368px;top:325px;width:23px;height:23px;background:rgb(239,239,239)"></div>
<div style="position:absolute;left:391px;top:325px;width:23px;height:23px;background:rgb(238,238,238)"></div>
<div style="position:absolute;left:414px;top:325px;width:23px;height:23px;background:rgb(239,239,239)"></div>
<div style="position:absolute;left:437px;top:325px;width:23px;height:23px;background:rgb(232,232,232)"></div>
<div style="position:absolute;left:460px;top:325px;width:23px;height:23px;background:rgb(233,233,233)"></div>
<div style="position:absolute;left:483px;top:325px;width:23px;height:23px;background:rgb(239,239,239)"></div>
<div style="position:absolute;left:506px;top:325px;width:23px;height:23px;background:rgb(239,239,239)"></div>
<div style="position:absolute;left:529px;top:325px;width:23px;height:23px;background:rgb(254,254,254)"></div>
<div style="position:absolute;left:552px;top:325px;width:23px;height:23px;background:rgb(233,233,233)"></div>
<div style="position:absolute;left:346px;top:348px;width:22px;height:20px;background:rgb(253,253,253)"></div>
<div style="position:absolute;left:368px;top:348px;width:23px;height:20px;background:rgb(253,253,253)"></div>
<div style="position:absolute;left:391px;top:348px;width:23px;height:20px;background:rgb(252,252,252)"></div>
<div style="position:absolute;left:414px;top:348px;width:23px;height:20px;background:rgb(251,251,251)"></div>
<div style="position:absolute;left:437px;top:348px;width:23px;height:20px;background:rgb(252,252,252)"></div>
<div style="position:absolute;left:460px;top:348px;width:23px;height:20px;background:rgb(250,250,250)"></div>
<div style="position:absolute;left:483px;top:348px;width:23px;height:20px;background:rgb(249,249,249)"></div>
<div style="position:absolute;left:506px;top:348px;width:23px;height:20px;background:rgb(249,249,249)"></div>
<div style="position:absolute;left:552px;top:348px;width:23px;height:20px;background:rgb(252,252,252)"></div>
<div style="position:absolute;left:575px;top:256px;width:8px;height:23px;background:#f8f8f8"></div>
<div style="position:absolute;left:575px;top:279px;width:8px;height:23px;background:#f3f3f3"></div>
<div style="position:absolute;left:644px;top:122px;width:12px;height:133px;background:#f8f8f8"></div>
<div style="position:absolute;left:641px;top:255px;width:15px;height:11px;background:#f3f3f3"></div>
<div style="position:absolute;left:295px;top:378px;width:583px;height:1px;background:#c8cdd3"></div>
<div style="position:absolute;left:295px;top:379px;width:583px;height:84px;background:#fff"></div>
<div style="position:absolute;left:308.4px;top:385.75px;height:20px;line-height:20px;font-size:14px;font-weight:400;color:#111;letter-spacing:-0.275px;white-space:pre;-webkit-text-stroke:0.4px #111">Site System Roles</div>
<div style="position:absolute;left:295px;top:410px;width:583px;height:1px;background:#e8ebef"></div>
<div style="position:absolute;left:295px;top:411px;width:583px;height:12px;background:#fff"></div>
<div style="position:absolute;left:295px;top:423px;width:583px;height:11px;background:#eef1f5"></div>
<div style="position:absolute;left:295px;top:434px;width:583px;height:1px;background:#c6cbd1"></div>
<div style="position:absolute;left:295px;top:435px;width:583px;height:1px;background:#e6e9ec"></div>
<div style="position:absolute;left:344px;top:411px;width:2px;height:23px;background:linear-gradient(90deg,#cfd3d8,#f6f7f9)"></div>
<div style="position:absolute;left:594px;top:411px;width:2px;height:23px;background:linear-gradient(90deg,#cfd3d8,#f6f7f9)"></div>
<div style="position:absolute;left:300.4px;top:414.84px;height:20px;line-height:20px;font-size:12px;font-weight:400;color:#262626;letter-spacing:-0.047px;white-space:pre;">Icon</div>
<div style="position:absolute;left:350.6px;top:414.84px;height:20px;line-height:20px;font-size:12px;font-weight:400;color:#262626;letter-spacing:-0.115px;white-space:pre;">Role Name</div>
<div style="position:absolute;left:600.6px;top:414.84px;height:20px;line-height:20px;font-size:12px;font-weight:400;color:#262626;letter-spacing:-0.165px;white-space:pre;">Role Description</div>
<svg style="left:465px;top:411px" width="9" height="4" viewBox="0 0 9 4"><path d="M0 4 L4.5 0 L9 4Z" fill="#1e1e1e"/></svg>
<div style="position:absolute;left:295px;top:436px;width:583px;height:21px;box-sizing:border-box;border:1px solid #c9c9c9;border-top-color:#dedede;border-right:none;border-radius:3px 0 0 3px;background:linear-gradient(#fafafa,#ebebeb)"></div>
<svg style="left:304px;top:438px" width="17" height="17" viewBox="0 0 17 17">
<defs><linearGradient id="ssg" x1="0" y1="0" x2="0" y2="1"><stop offset="0" stop-color="#d4d8de"/><stop offset="1" stop-color="#98a0aa"/></linearGradient></defs>
<rect x="0.3" y="0.3" width="7.7" height="15.7" fill="url(#ssg)" stroke="#646a74" stroke-width="0.6"/>
<rect x="1" y="0.8" width="6.5" height="1.2" fill="#2e3846"/>
<rect x="1" y="2.8" width="6.5" height="1.6" fill="#f2f4f6"/><rect x="1" y="5.6" width="6.5" height="1.6" fill="#f2f4f6"/>
<rect x="5" y="13" width="2.2" height="2.2" fill="#40e020"/>
<path d="M6.5 3.8 L12 0.6 L16.4 7.2 L10.6 11.6Z" fill="#f2f6fb" stroke="#6a9fd6" stroke-width="1.1"/>
<path d="M9.2 5.6 L12.2 3.9 M10.2 7.4 L13.4 5.6" stroke="#5570b8" stroke-width="0.8"/>
</svg>
<div style="position:absolute;left:354.3px;top:437.34px;height:20px;line-height:20px;font-size:12px;font-weight:400;color:#262626;letter-spacing:0.044px;white-space:pre;">Site system</div>
<div style="position:absolute;left:604.2px;top:437.34px;height:20px;line-height:20px;font-size:12px;font-weight:400;color:#262626;letter-spacing:-0.078px;white-space:pre;">A server or server share that hosts one or more site</div>
<div style="position:absolute;left:601px;top:279px;width:249px;height:131px;box-sizing:border-box;border:1px solid #979797;border-radius:2px 0 0 0;background:#f0f0f0;box-shadow:1px 1px 2px rgba(0,0,0,0.12)"></div>
<div style="position:absolute;left:631px;top:280px;width:1px;height:129px;background:#e2e3e3"></div>
<div style="position:absolute;left:632px;top:280px;width:1px;height:129px;background:#ffffff"></div>
<svg style="left:609px;top:286px" width="17" height="16" viewBox="0 0 17 16">
<rect x="0.5" y="4" width="8" height="11" fill="#2a7fda"/>
<rect x="1.5" y="5.5" width="6" height="1.6" fill="#a6d6ff"/><rect x="1.5" y="8.5" width="6" height="1.6" fill="#a6d6ff"/><rect x="1.5" y="11.5" width="6" height="1.6" fill="#a6d6ff"/>
<rect x="6" y="13.5" width="5.5" height="2" fill="#0b3fa0"/>
<path d="M6.8 4.6 L9.9 1.6 L15.3 8 L12.2 11Z" fill="#f4f7fb" stroke="#6f94bc" stroke-width="1.3"/>
<path d="M10 5.5 L11.5 7 M11.5 5 L13 6.5 M10.5 7.5 L12 9" stroke="#b8c8dc" stroke-width="0.7"/>
<g transform="translate(3.6,3.4)"><path d="M0 -3.6 V3.6 M-3.6 0 H3.6 M-2.6 -2.6 L2.6 2.6 M-2.6 2.6 L2.6 -2.6" stroke="#f29a12" stroke-width="1.3" stroke-linecap="round"/><circle r="2" fill="#ffbf30"/></g>
</svg>
<div style="position:absolute;left:635.5px;top:284.84px;height:20px;line-height:20px;font-size:12px;font-weight:400;color:#1a1a1a;letter-spacing:-0.320px;white-space:pre;">Add Site System Roles</div>
<svg style="left:612px;top:310px" width="12" height="16" viewBox="0 0 12 16">
<defs><linearGradient id="stg" x1="0" y1="0" x2="1" y2="0"><stop offset="0" stop-color="#7ee060"/><stop offset="1" stop-color="#3cc02c"/></linearGradient></defs>
<path d="M1.2 1 Q1 0.6 1.6 0.9 L10.3 7.3 Q10.8 7.7 10.3 8.1 L1.6 14.6 Q1 15 1.2 14.3Z" fill="url(#stg)" stroke="#2a9a1c" stroke-width="1"/>
</svg>
<div style="position:absolute;left:635.5px;top:308.84px;height:20px;line-height:20px;font-size:12px;font-weight:400;color:#1a1a1a;letter-spacing:-0.349px;white-space:pre;">Start</div>
<svg style="left:833px;top:315px" width="5" height="8" viewBox="0 0 5 8"><path d="M0 0 L4.5 4 L0 8Z" fill="#111"/></svg>
<svg style="left:609px;top:334px" width="16" height="16" viewBox="0 0 16 16">
<path d="M5.2 13.6 A5.6 5.6 0 1 1 13 8.2" fill="none" stroke="#3cc032" stroke-width="2.8"/>
<path d="M5.2 13.6 A5.6 5.6 0 1 1 13 8.2" fill="none" stroke="#8ae870" stroke-width="0.8"/>
<path d="M8.6 7.2 L15.6 9.6 L9.4 15.2Z" fill="#2cb820"/>
</svg>
<div style="position:absolute;left:635.5px;top:332.84px;height:20px;line-height:20px;font-size:12px;font-weight:400;color:#1a1a1a;letter-spacing:-0.547px;white-space:pre;">Refresh</div>
<div style="position:absolute;left:793.6px;top:332.84px;height:20px;line-height:20px;font-size:12px;font-weight:400;color:#1a1a1a;letter-spacing:-0.858px;white-space:pre;">F5</div>
<div style="position:absolute;left:605px;top:356px;width:242px;height:20px;background:linear-gradient(#e9f2fa,#dde9f5);box-sizing:border-box;border-right:2px solid #f6fafd"></div>
<div style="position:absolute;left:601px;top:352px;width:250px;height:28px;box-sizing:border-box;border:4px solid #3aa0c4"></div>
<div style="position:absolute;left:602px;top:380px;width:248px;height:1px;background:#3c3a3a"></div>
<svg style="left:609px;top:358px" width="16" height="16" viewBox="0 0 16 16">
<path d="M0.5 3.8 Q1.8 1.5 4.2 2.8 Q8.5 6 11.5 13.5 Q11.6 14.6 10.5 14 Q7 10.5 2.8 6 Q1.2 4.8 0.5 3.8Z" fill="#d41c1c"/>
<path d="M15.8 0.8 Q10.5 2.8 6.5 7.2 Q3 11.2 1.8 14.6 Q1.8 15.8 3.2 15 Q6.2 11.2 9.3 8.2 Q12.5 4.8 15.8 0.8Z" fill="#e42a2a" stroke="#c41818" stroke-width="0.9"/>
</svg>
<div style="position:absolute;left:635.4px;top:356.84px;height:20px;line-height:20px;font-size:12px;font-weight:400;color:#1a1a1a;letter-spacing:-0.215px;white-space:pre;">Delete</div>
<div style="position:absolute;left:793.6px;top:356.84px;height:20px;line-height:20px;font-size:12px;font-weight:400;color:#1a1a1a;letter-spacing:-0.165px;white-space:pre;">Delete</div>
<div style="position:absolute;left:602px;top:381px;width:247px;height:1px;background:#d7d7d7"></div>
<svg style="left:609px;top:387px" width="16" height="16" viewBox="0 0 16 16">
<rect x="0.5" y="0.5" width="14.5" height="15" rx="1.5" fill="#eceef0" stroke="#7a8088"/>
<rect x="2" y="2.5" width="11.5" height="10.5" fill="#fafbfc" stroke="#a0a6ae" stroke-width="0.6"/>
<rect x="3" y="3.5" width="9.5" height="2" fill="#dde2e8"/>
<rect x="3.5" y="7.3" width="1" height="1" fill="#2a90e0"/><rect x="5.5" y="7.3" width="6" height="1" fill="#8a96a6"/>
<rect x="3.5" y="9.8" width="1" height="1" fill="#8a96a6"/><rect x="5.5" y="9.8" width="6" height="1" fill="#8a96a6"/>
<rect x="6" y="13.2" width="3.5" height="1.6" fill="#2aa8e8"/>
</svg>
<div style="position:absolute;left:635.5px;top:385.84px;height:20px;line-height:20px;font-size:12px;font-weight:400;color:#111;letter-spacing:0.300px;white-space:pre;-webkit-text-stroke:0.5px #111">Properties</div>
</div></body></html>
